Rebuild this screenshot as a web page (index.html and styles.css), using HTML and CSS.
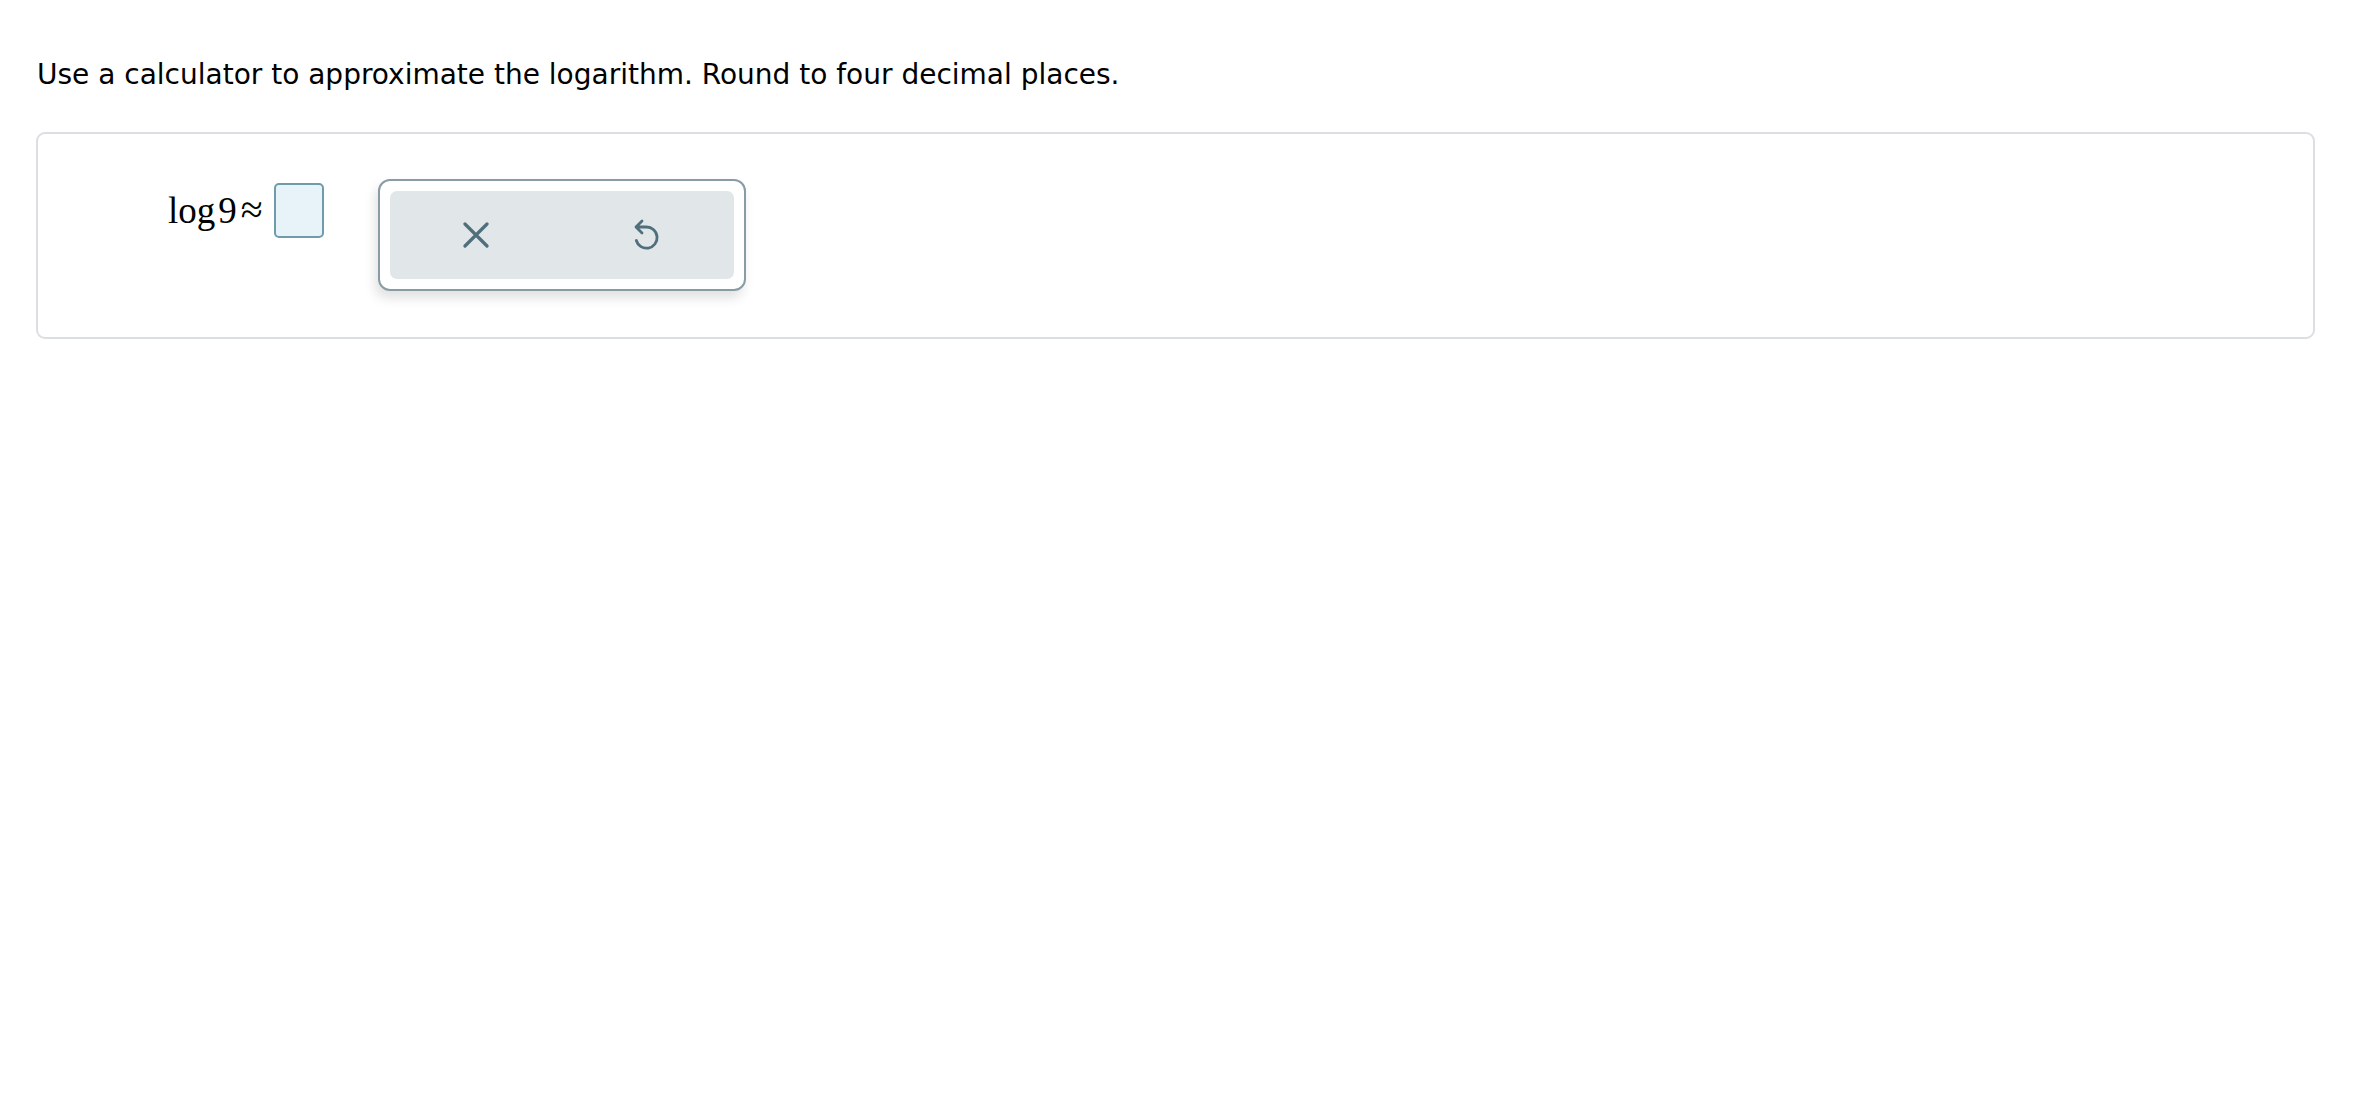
FILE: index.html
```html
<!DOCTYPE html>
<html lang="en">
<head>
<meta charset="utf-8">
<title>Logarithm</title>
<link rel="stylesheet" href="styles.css">
</head>
<body>
<main class="page">
  <p class="prompt">Use a calculator to approximate the logarithm. Round to four decimal places.</p>
  <section class="card">
    <div class="math"><span class="fn">log</span><span class="num">9</span><span class="rel">≈</span><span class="answer"></span></div>
    <div class="tools">
      <div class="tools-inner">
        <button class="tool" type="button" aria-label="Clear">
          <svg width="26" height="26" viewBox="0 0 26 26"><path d="M2 2 L24 24 M24 2 L2 24" fill="none" stroke="#4f6f7c" stroke-width="3.2" stroke-linecap="round"/></svg>
        </button>
        <button class="tool" type="button" aria-label="Undo">
          <svg width="32" height="32" viewBox="0 0 32 32"><path d="M10 2 L4 8 L10 14 M4 8 H14.5 A10.6 10.6 0 1 1 4.3 21.5" fill="none" stroke="#4f6f7c" stroke-width="2.8" stroke-linecap="round" stroke-linejoin="round"/></svg>
        </button>
      </div>
    </div>
  </section>
</main>
</body>
</html>
```
FILE: styles.css
```css
html, body {
  margin: 0;
  padding: 0;
  background: #ffffff;
}

.page {
  padding: 0 39px 0 36px;
  font-family: "DejaVu Sans", Verdana, sans-serif;
  color: #000;
}

.prompt {
  margin: 0;
  padding-top: 59px;
  font-size: 28px;
  line-height: 32px;
  padding-left: 1px;
}

.card {
  margin-top: 41px;
  border: 2px solid #dcdfe2;
  border-radius: 9px;
  padding: 45px 0 46px 130px;
  display: flex;
  align-items: flex-start;
}

.math {
  margin-top: 4px;
  font-family: "Liberation Serif", "Times New Roman", serif;
  font-size: 37px;
  line-height: 40px;
  white-space: nowrap;
}

.num {
  margin-left: 3px;
}

.rel {
  margin-left: 4px;
  font-size: 40px;
}

.answer {
  display: inline-block;
  box-sizing: border-box;
  width: 50px;
  height: 55px;
  margin-left: 11px;
  vertical-align: -15px;
  border: 2px solid #6f9cab;
  border-radius: 5px;
  background: #e7f3f8;
}

.tools {
  margin-left: 54px;
  padding: 10px;
  border: 2px solid #889ca5;
  border-radius: 12px;
  background: #fff;
  box-shadow: -3px 7px 12px rgba(0, 0, 0, 0.12);
}

.tools-inner {
  width: 344px;
  height: 88px;
  display: flex;
  background: #e1e6e9;
  border-radius: 7px;
}

.tool {
  flex: 1;
  display: flex;
  align-items: center;
  justify-content: center;
  border: 0;
  padding: 0;
  margin: 0;
  background: transparent;
}

.tool svg {
  display: block;
}
```
